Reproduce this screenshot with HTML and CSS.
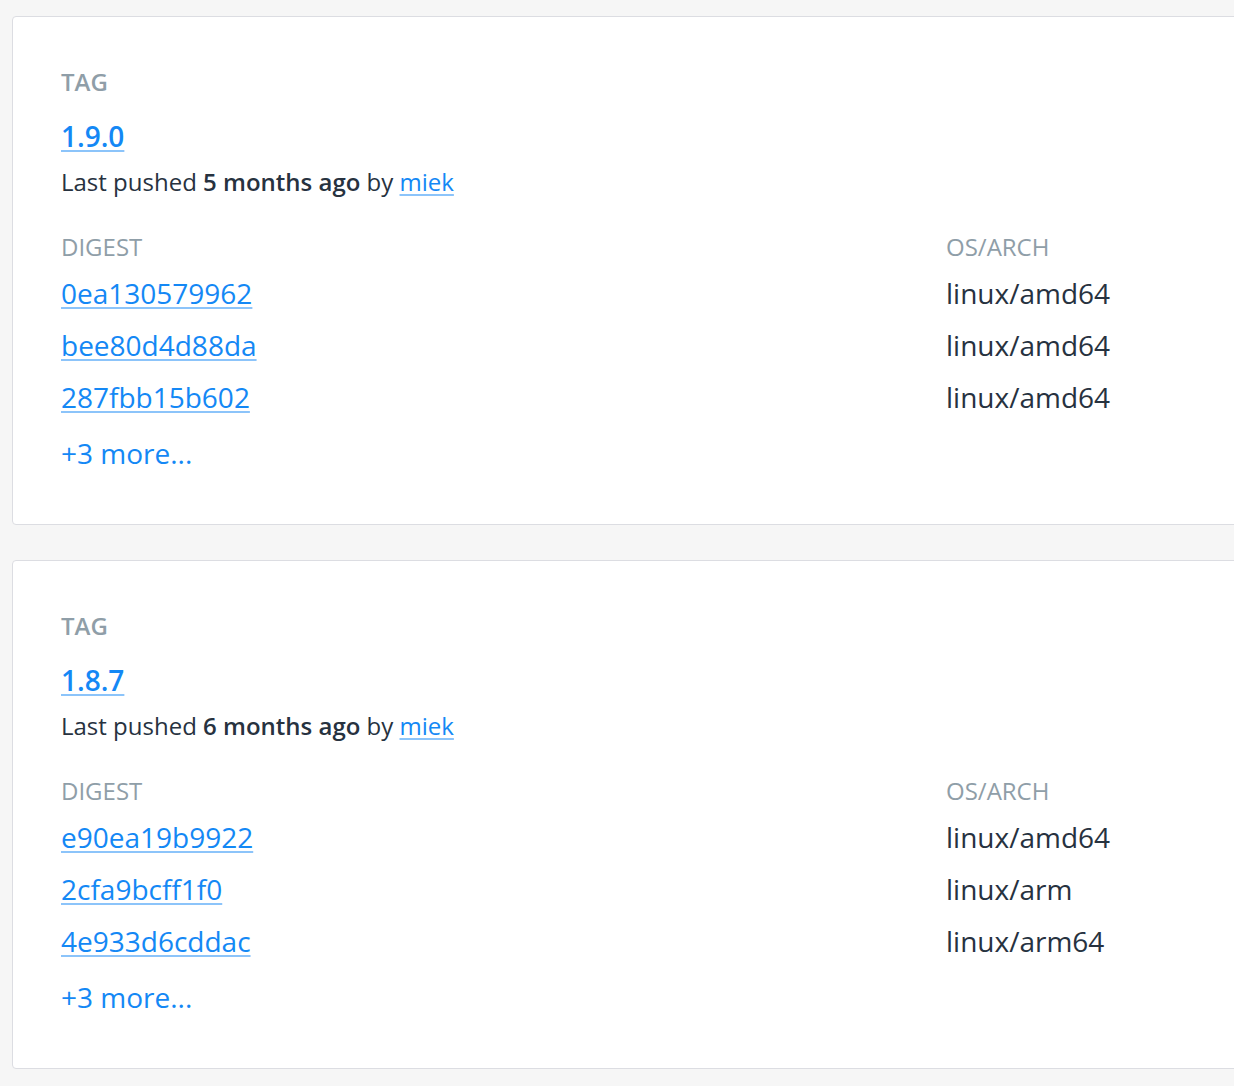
FILE: index.html
```html
<!DOCTYPE html>
<html lang="en">
<head>
    <meta charset="UTF-8">
    <meta name="viewport" content="width=device-width, initial-scale=1.0">
    <title>Tags</title>
    <link rel="stylesheet" href="styles.css">
</head>
<body>
    <div class="tag-list">
        <div class="tag-card">
            <div class="label label-tag">TAG</div>
            <a class="tag-name" href="#">1.9.0</a>
            <div class="pushed">Last pushed <b>5 months ago</b> by <a href="#">miek</a></div>
            <div class="digest-table">
                <div class="label">DIGEST</div>
                <div class="label">OS/ARCH</div>
                <div class="cell"><a href="#">0ea130579962</a></div>
                <div class="cell">linux/amd64</div>
                <div class="cell"><a href="#">bee80d4d88da</a></div>
                <div class="cell">linux/amd64</div>
                <div class="cell"><a href="#">287fbb15b602</a></div>
                <div class="cell">linux/amd64</div>
            </div>
            <div class="more">+3 more...</div>
        </div>

        <div class="tag-card">
            <div class="label label-tag">TAG</div>
            <a class="tag-name" href="#">1.8.7</a>
            <div class="pushed">Last pushed <b>6 months ago</b> by <a href="#">miek</a></div>
            <div class="digest-table">
                <div class="label">DIGEST</div>
                <div class="label">OS/ARCH</div>
                <div class="cell"><a href="#">e90ea19b9922</a></div>
                <div class="cell">linux/amd64</div>
                <div class="cell"><a href="#">2cfa9bcff1f0</a></div>
                <div class="cell">linux/arm</div>
                <div class="cell"><a href="#">4e933d6cddac</a></div>
                <div class="cell">linux/arm64</div>
            </div>
            <div class="more">+3 more...</div>
        </div>
    </div>
</body>
</html>
```

FILE: styles.css
```css
html, body {
    margin: 0;
    padding: 0;
    background-color: #f6f6f6;
    overflow: hidden;
    font-family: "Open Sans", Arial, sans-serif;
    color: #27323f;
}
.tag-list {
    padding: 16px 0 0 12px;
}
.tag-card {
    width: 1280px;
    background-color: #fff;
    border: 1px solid #dcdde2;
    border-radius: 4px;
    padding: 47px 48px 45px 48px;
    margin-bottom: 35px;
    box-sizing: border-box;
}
a {
    color: #1488f5;
    text-decoration: underline;
    text-decoration-color: #8cc4fa;
    text-decoration-thickness: 2px;
    text-underline-offset: 3px;
}
.label {
    font-size: 24px;
    line-height: 36px;
    color: #8f9ea8;
}
.label-tag {
    font-weight: 600;
}
.tag-name {
    display: inline-block;
    margin-top: 15px;
    font-size: 28px;
    line-height: 42px;
    font-weight: 600;
}
.pushed {
    margin-top: 7px;
    font-size: 24px;
    line-height: 36px;
}
.pushed b {
    font-weight: 600;
}
.digest-table {
    display: grid;
    grid-template-columns: 885px 1fr;
    margin-top: 29px;
}
.digest-table .label {
    margin-bottom: 2px;
}
.cell {
    font-size: 28px;
    line-height: 52px;
}
.more {
    font-size: 28px;
    line-height: 52px;
    margin-top: 4px;
    color: #1488f5;
}
```
